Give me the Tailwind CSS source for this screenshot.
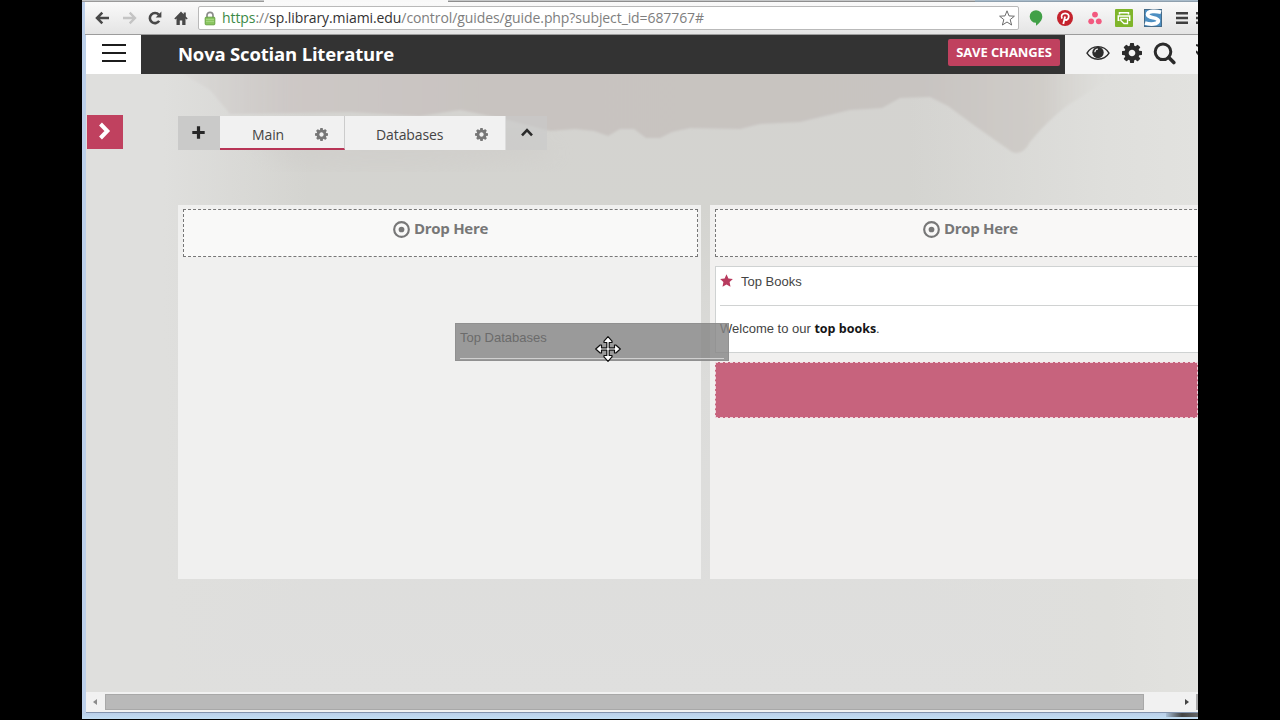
<!DOCTYPE html>
<html lang="en">
<head>
<meta charset="utf-8">
<title>Nova Scotian Literature</title>
<script src="https://cdn.jsdelivr.net/npm/@tailwindcss/browser@4"></script>
</head>
<body class="bg-black">
<svg class="hidden">
  <symbol id="cog" viewBox="0 128 1536 1536"><path d="M1024 896q0-106-75-181t-181-75-181 75-75 181 75 181 181 75 181-75 75-181zm512-109v222q0 12-8 23t-20 13l-185 28q-19 54-39 91 35 50 107 138 10 12 10 25t-9 23q-27 37-99 108t-94 71q-12 0-26-9l-138-108q-44 23-91 38-16 136-29 186-7 28-36 28h-222q-14 0-24.5-8.5t-11.5-21.5l-28-184q-49-16-90-37l-141 107q-10 9-25 9-14 0-25-11-126-114-165-168-7-10-7-23 0-12 8-23 15-21 51-66.5t54-70.5q-27-50-41-99l-183-27q-13-2-21-12.5t-8-23.5v-222q0-12 8-23t19-13l186-28q14-46 39-92-40-57-107-138-10-12-10-24 0-10 9-23 26-36 98.5-107.5t94.5-71.5q13 0 26 10l138 107q44-23 91-38 16-136 29-186 7-28 36-28h222q14 0 24.5 8.5t11.5 21.5l28 184q49 16 90 37l142-107q9-9 24-9 13 0 25 10 129 119 165 170 7 8 7 22 0 12-8 23-15 21-51 66.5t-54 70.5q26 50 41 98l183 28q13 2 21 12.5t8 23.5z"/></symbol>
  <symbol id="target" viewBox="0 0 16 16"><circle cx="8" cy="8" r="6.900" fill="none" stroke="#777" stroke-width="2"/><circle cx="8" cy="8" r="2.700" fill="#777"/></symbol>
</svg>

<div class="relative w-[1280px] h-[720px] overflow-hidden pl-[82px] pr-[82px] font-['Open_Sans',sans-serif]">
<div class="flex flex-col w-[1116px] h-[719px] overflow-hidden bg-[#bdd0ea]">

  <!-- Browser tab strip edge -->
  <div class="flex h-[2px] shrink-0">
    <div class="w-[182px] bg-[#c6c8c9] border-b border-[#999]"></div>
    <div class="w-[184px] bg-[#f8f8f8]"></div>
    <div class="w-[527px] bg-[#c6c8c9] border-b border-[#8e8e8e]"></div>
    <div class="flex-1 bg-[#a9bccb] border-b border-[#8fa0ae]"></div>
  </div>

  <!-- Browser toolbar -->
  <div class="flex items-center h-[33px] shrink-0 ml-[3px] border-b border-[#9c9c9c] bg-linear-to-b from-[#fafafa] to-[#e4e4e4]">
    <svg class="w-[15px] h-[14px] ml-[10px] shrink-0" viewBox="0 0 15 14" fill="none" stroke="#484848" stroke-width="2.500"><path d="M14 7H2.500M7.300 1.600L2 7l5.300 5.400"/></svg>
    <svg class="w-[15px] h-[14px] ml-[12px] shrink-0" viewBox="0 0 15 14" fill="none" stroke="#c4c4c4" stroke-width="2.300"><path d="M1 7h11.500M7.700 1.600L13 7l-5.300 5.400"/></svg>
    <svg class="w-[14px] h-[14px] ml-[11px] shrink-0" viewBox="0 0 14 14"><path d="M11.200 9.900A5.100 5.100 0 1 1 10.800 3.700" fill="none" stroke="#484848" stroke-width="2.600"/><path d="M13.400.6v6H7.700z" fill="#484848"/></svg>
    <svg class="w-[14px] h-[14px] ml-[12px] shrink-0" viewBox="0 0 14 14" fill="#484848"><path d="M7 .5L.3 7.500l1 1L2.500 7.500V14h3.300V9.500h2.400V14h3.300V7.500l1.200 1 1-1-1.900-2V1.500H9.700v1.800z"/></svg>
    <div class="flex items-center w-[821px] h-[24px] ml-[10px] shrink-0 bg-white border border-[#b9b9b9] rounded-[2px]">
      <svg class="w-[12px] h-[15px] ml-[5px] shrink-0" viewBox="0 0 12 15"><path d="M3 7V4.300a3 3 0 0 1 6 0V7" fill="none" stroke="#8c8c8c" stroke-width="1.700"/><rect x="1.200" y="6.200" width="9.600" height="7.600" rx=".8" fill="#8ac660" stroke="#68a345"/><path d="M2 8.500h8M2 10.500h8" stroke="#a9d989" stroke-width=".8"/></svg>
      <div class="ml-[6px] w-[484px] whitespace-nowrap text-[14px] tracking-[-0.085px] leading-[20px] text-[#7e7e7e]"><span class="text-[#3b8a46]">https</span>://<span class="text-[#333]">sp.library.miami.edu</span>/control/guides/guide.php?subject_id=687767#</div>
      <svg class="w-[16px] h-[16px] ml-auto mr-[3px] shrink-0" viewBox="0 0 16 16" fill="#fff" stroke="#6b6b6b" stroke-width="1"><path d="M8 .8l2 5.100 5.400.3-4.200 3.400 1.400 5.400L8 12l-4.600 3L4.800 9.600.6 6.200 6 5.900z"/></svg>
    </div>
    <svg class="w-[14px] h-[16px] ml-[10px] shrink-0" viewBox="0 0 14 16" fill="#41a047"><path d="M7 .2a6.300 6.300 0 0 1 6.300 6.300c0 4-3.500 7.200-6.300 9.300v-3A6.300 6.300 0 0 1 7 .2z"/></svg>
    <svg class="w-[16px] h-[16px] ml-[14px] shrink-0" viewBox="0 0 16 16"><circle cx="8" cy="8" r="8" fill="#c4232d"/><path d="M6.300 14l1.800-7.500M5 8.600C3.500 5.500 5.500 3.300 8.200 3.300c2.800 0 4 2 3.400 4.200-.5 2.400-3 3.200-4.100 1.800" fill="none" stroke="#fff" stroke-width="1.800"/></svg>
    <svg class="w-[14px] h-[14px] ml-[15px] shrink-0" viewBox="0 0 14 14" fill="#f2597f"><circle cx="7" cy="3.600" r="2.900"/><circle cx="3.200" cy="10.300" r="2.900"/><circle cx="10.800" cy="10.300" r="2.900"/></svg>
    <svg class="w-[18px] h-[18px] ml-[13px] shrink-0" viewBox="0 0 18 18"><rect width="18" height="18" rx="1" fill="#7fb52a"/><path d="M4.500 5.500V3.800h9v1.700M4.500 11.300H3.300V7h11.400v4.300h-1.200" fill="none" stroke="#fff" stroke-width="1.500"/><path d="M5.800 9.500h6.700v5H9l-3.200-3z" fill="none" stroke="#fff" stroke-width="1.300"/></svg>
    <svg class="w-[18px] h-[18px] ml-[11px] shrink-0" viewBox="0 0 18 18"><rect x=".5" y=".5" width="17" height="17" fill="#4d8fc2" stroke="#456b89"/><path d="M17 3.300C12 1.800 3.600 1.600 3.600 5.600c0 4 10.800 2.300 10.700 6.200-.1 3.700-8 3.900-13.300 2.200" fill="none" stroke="#fff" stroke-width="3.800"/></svg>
    <svg class="w-[12px] h-[12px] ml-[14px] shrink-0" viewBox="0 0 12 12" fill="#3f3f3f"><path d="M0 0h12v2.400H0zM0 4.800h12v2.400H0zM0 9.600h12V12H0z"/></svg>
    <svg class="w-[12px] h-[12px] ml-[8px] shrink-0" viewBox="0 0 12 12" fill="#3f3f3f"><path d="M0 0h12v2.400H0zM0 4.800h12v2.400H0zM0 9.600h12V12H0z"/></svg>
  </div>

  <!-- Page -->
  <div class="flex flex-col h-[657px] shrink-0 ml-[4px] bg-[#dfdfde]">
    <div class="flex h-[39px] shrink-0">
      <div class="flex flex-col gap-[6px] w-[55px] pl-[16px] pt-[9px] bg-white">
        <div class="w-[24px] h-[2px] bg-[#1c1c1c]"></div>
        <div class="w-[24px] h-[2px] bg-[#1c1c1c]"></div>
        <div class="w-[24px] h-[2px] bg-[#1c1c1c]"></div>
      </div>
      <div class="flex justify-between w-[924px] pl-[37px] pr-[5px] bg-[#333]">
        <h1 class="text-[18.500px] tracking-[-0.18px] leading-[38px] font-bold text-white whitespace-nowrap">Nova Scotian Literature</h1>
        <div class="w-[112px] h-[27px] mt-[4px] rounded-[2px] bg-[#c0415f] text-center text-[13px] tracking-[-0.1px] leading-[27px] font-bold text-white whitespace-nowrap">SAVE CHANGES</div>
      </div>
      <div class="flex flex-1 bg-[#f3f3f3] overflow-hidden">
        <svg class="w-[24px] h-[18px] ml-[21px] mt-[9px] shrink-0" viewBox="0 0 24 18"><path d="M1 9.200C6 .4 18 .4 23 9.200 18 17.200 6 17.200 1 9.200z" fill="#f3f3f3" stroke="#2b2b2b" stroke-width="1.400"/><circle cx="12" cy="8.500" r="5.700" fill="#2b2b2b"/><path d="M8.800 8.200A3.400 3.400 0 0 1 12 5" fill="none" stroke="#eee" stroke-width="1.200"/></svg>
        <svg class="w-[20px] h-[20px] ml-[12px] mt-[8px] shrink-0 fill-[#2b2b2b]"><use href="#cog"/></svg>
        <svg class="w-[23px] h-[23px] ml-[11px] mt-[7px] shrink-0" viewBox="0 0 23 23" fill="none" stroke="#2b2b2b"><circle cx="10" cy="9.800" r="7.800" stroke-width="3"/><path d="M15.800 15.500l5 5" stroke-width="3.600" stroke-linecap="round"/></svg>
        <svg class="w-[14px] h-[14px] ml-[20px] mt-[9px] shrink-0" viewBox="0 0 14 14" fill="none" stroke="#2b2b2b" stroke-width="2"><path d="M0 1l3 1M0 7l3 4"/></svg>
      </div>
    </div>

    <div class="relative h-[618px] shrink-0 overflow-hidden">
      <!-- Faded landscape behind the guide -->
      <svg class="absolute left-0 top-0 w-[1112px] h-[619px]" viewBox="86 74 1112 619">
        <defs>
          <linearGradient id="sky" x1="0" y1="0" x2="0" y2="1"><stop offset="0" stop-color="#d4d3d0"/><stop offset=".22" stop-color="#d4d4d0"/><stop offset=".5" stop-color="#dcdcda"/><stop offset="1" stop-color="#dfdfde"/></linearGradient>
          <linearGradient id="side" x1="0" y1="0" x2="1" y2="0"><stop offset="0" stop-color="#dfdfdd"/><stop offset=".07" stop-color="#dfdfdd"/><stop offset=".2" stop-color="#dfdfdd" stop-opacity="0"/><stop offset=".74" stop-color="#dfdfdd" stop-opacity="0"/><stop offset=".92" stop-color="#dfdfdc"/><stop offset="1" stop-color="#e2e2df"/></linearGradient>
          <linearGradient id="hill" gradientUnits="userSpaceOnUse" x1="160" y1="0" x2="1110" y2="0"><stop offset="0" stop-color="#cfcbc9" stop-opacity="0"/><stop offset=".14" stop-color="#cdc8c6"/><stop offset=".35" stop-color="#c8c3c0"/><stop offset=".8" stop-color="#c8c4c1"/><stop offset=".93" stop-color="#d0cdc9"/><stop offset="1" stop-color="#dbd9d5" stop-opacity="0"/></linearGradient>
          <filter id="soft"><feGaussianBlur stdDeviation="1.200"/></filter>
          <filter id="haze"><feGaussianBlur stdDeviation="10"/></filter>
        </defs>
        <rect x="86" y="74" width="1112" height="619" fill="url(#sky)"/>
        <rect x="86" y="74" width="1112" height="619" fill="url(#side)"/>
        <path d="M160 60H1130Q1095 90 1068 105 1046 122 1030 142 1023 156 1012 152L975 126 948 106 930 97 900 98 882 108 850 110 825 116 800 122 760 124 740 129 690 128 672 132 660 138 646 138 634 129 620 129 608 136 594 131 575 129 550 131 500 118 460 110 420 116 350 112 230 114 210 90z" fill="url(#hill)" filter="url(#soft)"/>
        <path d="M250 140Q350 130 520 132L560 155Q430 175 290 165z" fill="#cbc8c5" opacity=".35" filter="url(#haze)"/>
      </svg>

      <div class="relative flex flex-col h-full">
        <div class="flex h-[77px] pt-[41px]">
          <div class="flex justify-center w-[36px] h-[34px] pt-[7px] ml-px bg-[#c0415f]">
            <svg class="w-[14px] h-[18px]" viewBox="0 0 14 18" fill="none" stroke="#fff" stroke-width="4"><path d="M2.500 2L9.300 9l-6.800 7"/></svg>
          </div>
          <div class="flex ml-[55px] mt-px h-[35px] text-[14px] text-[#444]">
            <div class="flex justify-center w-[42px] h-[34px] pt-[10px] pr-px bg-[#cacac9]">
              <svg class="w-[13px] h-[13px]" viewBox="0 0 13 13" fill="#272727"><path d="M4.900.3h3.200v4.600h4.600v3.200H8.100v4.600H4.900V8.100H.3V4.900h4.600z"/></svg>
            </div>
            <div class="flex w-[125px] h-[34px] pl-[32px] pr-[16px] pt-[4px] justify-between items-center tracking-[-0.1px] bg-[#f1f1f1] border-r border-r-[#ccc] border-b-[2px] border-b-[#b83556]">
              <span>Main</span><svg class="w-[13px] h-[13px] fill-[#777]"><use href="#cog"/></svg>
            </div>
            <div class="flex w-[161px] h-[34px] pl-[31px] pr-[17px] pt-[2px] justify-between items-center tracking-[-0.1px] bg-[#f1f1f1] border-r border-[#ddd]">
              <span>Databases</span><svg class="w-[13px] h-[13px] fill-[#777]"><use href="#cog"/></svg>
            </div>
            <div class="flex justify-center w-[41px] h-[34px] pt-[11px] bg-[#cacaca]/60">
              <svg class="w-[12px] h-[10px]" viewBox="0 0 12 10" fill="none" stroke="#2b2b2b" stroke-width="2.600"><path d="M1 8.300l5-5.200 5 5.200"/></svg>
            </div>
          </div>
        </div>

        <div class="flex gap-[9px] ml-[92px] mt-[54px] h-[374px]">
          <section class="w-[523px] h-[374px] shrink-0 pt-[4px] pl-[5px] pr-[3px] bg-[#f0f0ef]">
            <div class="flex justify-center gap-[4px] h-[48px] pt-[10px] border border-dashed border-[#777] bg-[#f9f9f8] text-[15px] tracking-[-0.3px] leading-[17px] font-bold text-[#777]">
              <svg class="w-[17px] h-[17px] mt-px"><use href="#target"/></svg>Drop Here
            </div>
          </section>
          <section class="w-[540px] h-[374px] shrink-0 pt-[4px] pl-[5px] bg-[#f1f0ef]">
            <div class="flex w-[532px] h-[48px] pl-[207px] gap-[4px] pt-[10px] border border-dashed border-[#777] bg-[#f9f8f7] text-[15px] tracking-[-0.3px] leading-[17px] font-bold text-[#777]">
              <svg class="w-[17px] h-[17px] mt-px"><use href="#target"/></svg>Drop Here
            </div>
            <article class="w-[532px] h-[87px] mt-[9px] pl-[4px] bg-white border border-[#cfd2d2] text-[13px] text-[#444] font-['Liberation_Sans',sans-serif]">
              <div class="flex h-[39px] pt-[6px] border-b border-[#d0d2d2] leading-[17px]">
                <svg class="w-[13px] h-[13px] mt-px mr-[8px] shrink-0" viewBox="0 0 13 13" fill="#b83b5e"><path d="M6.500.2l1.900 4.200 4.500.5-3.300 3.100.9 4.700-4-2.300-4 2.300.9-4.700L.1 4.900l4.500-.5z"/></svg>Top Books
              </div>
              <p class="pt-[14px] leading-[18px] whitespace-nowrap">Welcome to our <b class="font-['Open_Sans',sans-serif] text-[12.500px] text-[#151515]">top books</b>.</p>
            </article>
            <div class="w-[483px] h-[56px] mt-[9px] border border-dashed border-[#eed5dc] bg-[#c7637d]"></div>
          </section>
        </div>
      </div>
    </div>
  </div>

  <!-- Horizontal scrollbar -->
  <div class="flex items-center h-[21px] pb-px shrink-0 ml-[4px] bg-[#f1f1f1] border-b border-[#8293ad]">
    <svg class="w-[5px] h-[6px] ml-[7px] shrink-0" viewBox="0 0 5 6" fill="#8b8b8b"><path d="M4 0v6L0 3z"/></svg>
    <div class="w-[1039px] h-[16px] ml-[7px] shrink-0 bg-[#b9b9b9] border border-[#a8a8a8]"></div>
    <svg class="w-[5px] h-[6px] ml-[41px] shrink-0" viewBox="0 0 5 6" fill="#444"><path d="M0 0v6l4-3z"/></svg>
    <div class="w-[2px] h-[16px] ml-auto bg-[#aaa]"></div>
  </div>
  <div class="flex h-[6px] shrink-0 bg-linear-to-b from-[#b9cee8] to-[#c3def3]">
    <div class="w-[32px] h-[4px] ml-auto bg-linear-to-r from-[#a9c0d8] via-[#444] to-[#666]"></div>
  </div>
</div>

<!-- Box being dragged, with the move cursor -->
<div class="absolute left-[455px] top-[323px] w-[274px] h-[38px] px-[4px] pt-[5px] border border-[#8c8c8c]/70 bg-[#858585]/80 font-['Liberation_Sans',sans-serif] text-[13px] leading-[18px] text-[#6b6b6b]">
  <div class="h-[30px] border-b border-[#d0d0d0]">Top Databases</div>
</div>
<svg class="absolute left-[595px] top-[336px] w-[26px] h-[26px]" viewBox="0 0 26 26" fill="#fff" stroke="#111" stroke-width="1.200" stroke-linejoin="round"><path d="M13 .7l4 4.500V6.500h-2.800v5.300h5.300V9h1.300l4.500 4-4.500 4h-1.300v-2.800h-5.300v5.300H17v1.300l-4 4.500-4-4.500v-1.300h2.800v-5.300H6.500V17H5.200L.7 13l4.500-4h1.300v2.800h5.300V6.500H9V5.200z"/></svg>
</div>
</body>
</html>
